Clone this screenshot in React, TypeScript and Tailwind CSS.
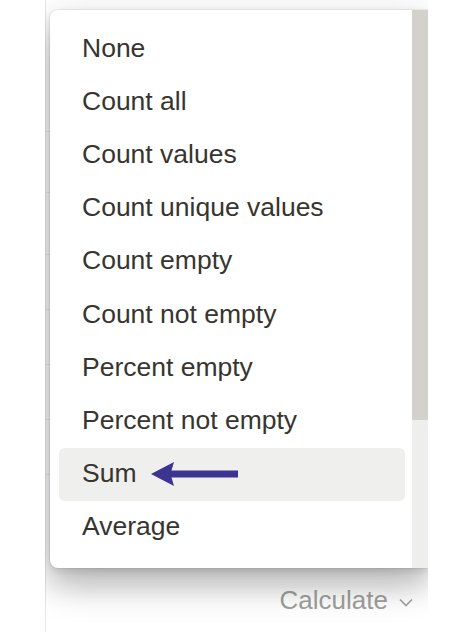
const items = [
  'None',
  'Count all',
  'Count values',
  'Count unique values',
  'Count empty',
  'Count not empty',
  'Percent empty',
  'Percent not empty',
  'Sum',
  'Average',
];

function Arrow() {
  return (
    <svg width="88" height="26" viewBox="0 0 88 26" className="ml-[14px] shrink-0">
      <path d="M0 13 L23 1 L20.5 9.5 L87 9.5 L87 16.5 L20.5 16.5 L23 25 Z" fill="#3b3491" />
    </svg>
  );
}

export default function App() {
  return (
    <div
      className="w-[474px] h-[632px] bg-white pl-[45px]"
      style={{ fontFamily: '"Liberation Sans", Arial, sans-serif' }}
    >
      <div className="relative w-[383px] h-full overflow-hidden bg-white">
        {/* table behind the menu */}
        <div className="flex flex-col h-full border-l border-[#e8e8e6]">
          <div className="h-[132px] border-b border-[#ececea]" />
          <div className="h-[61px] border-b border-[#ececea]" />
          <div className="h-[62px] border-b border-[#ececea]" />
          <div className="h-[55px] border-b border-[#ececea]" />
          <div className="h-[55px] border-b border-[#ececea]" />
          <div className="h-[55px] border-b border-[#ececea]" />
          <div className="h-[55px] border-b border-[#ececea]" />
          <div className="mt-auto h-[64px] flex items-center justify-end gap-[11px] pr-[15px] text-[26px] text-[#9f9f9d]">
            <span>Calculate</span>
            <svg width="14" height="9" viewBox="0 0 14 9" className="mt-[4px]">
              <path d="M1 1.5 L7 7.5 L13 1.5" fill="none" stroke="#a3a3a1" strokeWidth="1.7" />
            </svg>
          </div>
        </div>

        {/* dropdown menu */}
        <div className="absolute left-[5px] top-[10px] w-[378px] h-[558px] flex overflow-hidden bg-white rounded-l-[8px] shadow-[0_0_0_1px_rgba(15,15,15,0.05),0_3px_6px_rgba(15,15,15,0.1),0_14px_40px_rgba(15,15,15,0.24),0_18px_24px_rgba(15,15,15,0.12)]">
          <div className="flex-1 flex flex-col pt-[12px] pl-[9px] pr-[7px]">
            {items.map((label) => (
              <div
                key={label}
                className={
                  'shrink-0 h-[53.2px] flex items-center pl-[23px] rounded-[6px] text-[26.5px] text-[#37352f] ' +
                  (label === 'Sum' ? 'bg-[#efefee]' : '')
                }
              >
                <span>{label}</span>
                {label === 'Sum' && <Arrow />}
              </div>
            ))}
          </div>
          <div className="w-[16px] flex flex-col bg-[#eeeeec]">
            <div className="h-[410px] bg-[#d3d1cb]" />
          </div>
        </div>
      </div>
    </div>
  );
}
